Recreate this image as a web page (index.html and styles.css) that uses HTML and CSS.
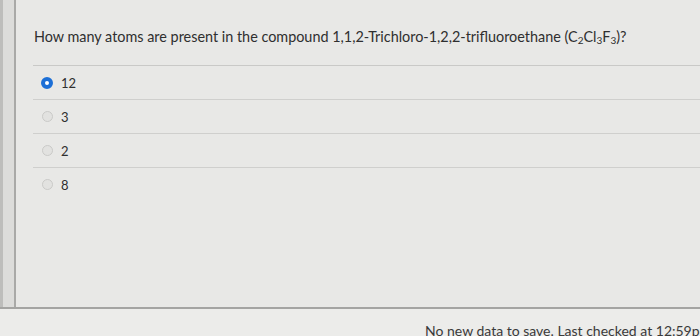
FILE: index.html
```html
<!DOCTYPE html>
<html lang="en">
<head>
    <meta charset="UTF-8">
    <meta name="viewport" content="width=device-width, initial-scale=1.0">
    <title>Question</title>
    <link rel="stylesheet" href="styles.css">
</head>
<body>
    <div class="page">
        <div class="edge"></div>
        <div class="content">
            <p class="question">How many atoms are present in the compound 1,1,2-Trichloro-1,2,2-trifluoroethane (C<sub>2</sub>Cl<sub>3</sub>F<sub>3</sub>)?</p>
            <ul class="answers">
                <li class="answer"><span class="radio checked"></span>12</li>
                <li class="answer"><span class="radio"></span>3</li>
                <li class="answer"><span class="radio"></span>2</li>
                <li class="answer"><span class="radio"></span>8</li>
            </ul>
        </div>
    </div>
    <div class="status">No new data to save. Last checked at 12:59pm</div>
</body>
</html>
```

FILE: styles.css
```css
body {
    margin: 0;
    font-family: Lato, "Open Sans", sans-serif;
    background-color: #e6e6e4;
    color: #2f2f2f;
    overflow: hidden;
}
.page {
    display: flex;
    height: 307px;
}
.edge {
    width: 14px;
    background: linear-gradient(to right, #bdbdbb 0, #bdbdbb 3px, #dcdcda 3px);
    border-right: 2px solid #a9a9a7;
}
.content {
    flex: 1;
    background-color: #e8e8e6;
}
.question {
    margin: 0;
    padding: 28px 0 0 18px;
    font-size: 14.4px;
    height: 37px;
    white-space: nowrap;
}
.question sub {
    font-size: 10px;
    vertical-align: -2px;
    line-height: 0;
}
.answers {
    list-style: none;
    margin: 0 0 0 17px;
    padding: 0;
    border-top: 1px solid #c9c9c7;
}
.answer {
    display: flex;
    align-items: center;
    height: 33px;
    border-bottom: 1px solid #cfcfcd;
    font-size: 13px;
    padding-left: 4px;
}
.answer:last-child {
    border-bottom: none;
}
.radio {
    width: 11px;
    height: 11px;
    border: 1px solid #cacac8;
    background-color: #e2e2e0;
    border-radius: 50%;
    margin: 0 8px 0 5px;
    box-sizing: border-box;
}
.radio.checked {
    width: 12px;
    height: 12px;
    margin: 0 8px 0 4px;
    border: 4px solid #1c6fd6;
    background-color: #fff;
}
.status {
    border-top: 2px solid #a4a4a2;
    background-color: #ececea;
    height: 12px;
    overflow: hidden;
    padding-left: 425px;
    font-size: 14px;
    line-height: 1;
    padding-top: 15px;
    color: #3a3a3a;
    white-space: nowrap;
}
```
